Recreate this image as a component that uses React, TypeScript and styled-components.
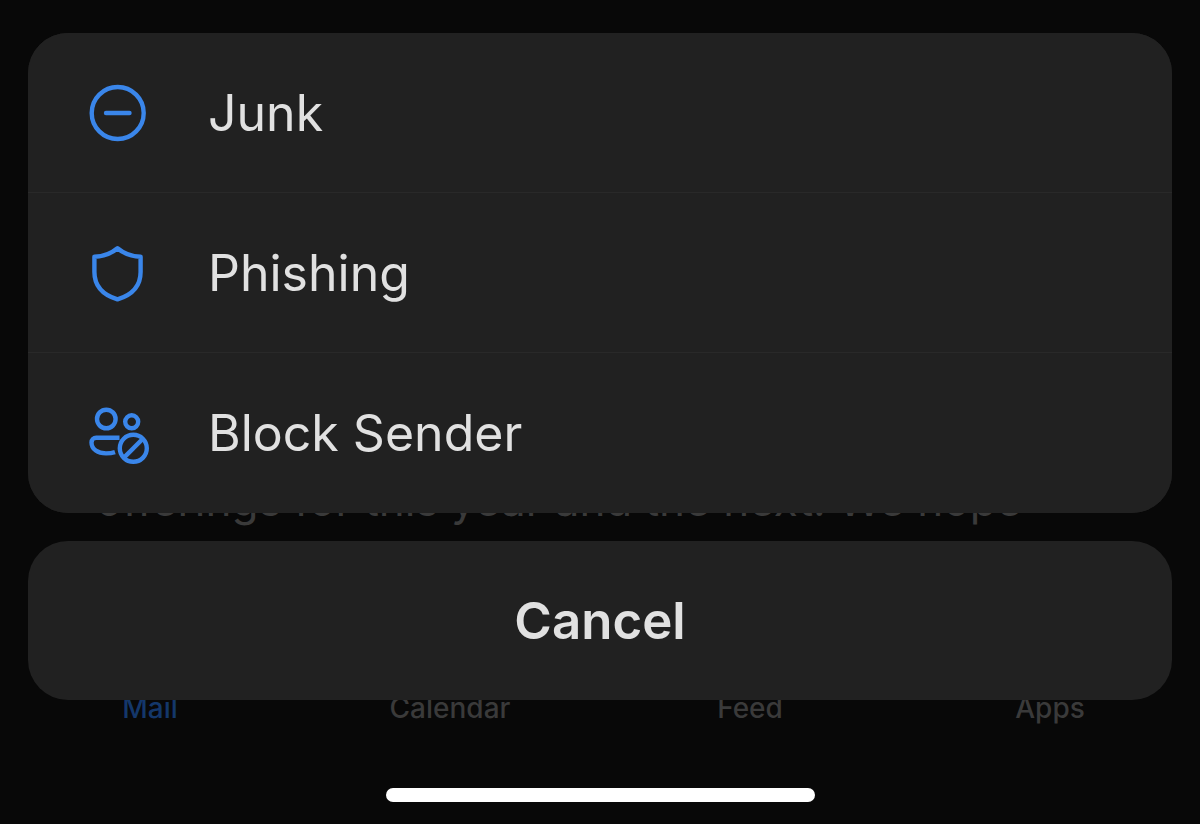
import React from "react";
import styled, { createGlobalStyle } from "styled-components";

const GlobalStyle = createGlobalStyle`
  *, *::before, *::after { box-sizing: border-box; }
  body {
    margin: 0;
    background: #080808;
    font-family: Inter, "Liberation Sans", sans-serif;
  }
`;

const Screen = styled.div`
  position: relative;
  min-height: 100vh;
  display: flex;
  flex-direction: column;
  justify-content: flex-end;
  overflow: hidden;
  background: #080808;
`;

const Message = styled.p`
  margin: 0 0 158px;
  padding: 0 96px;
  color: #3a3a3a;
  font-size: 44px;
  line-height: 64px;
  white-space: nowrap;
`;

const TabBar = styled.nav`
  display: grid;
  grid-template-columns: repeat(4, 1fr);
  margin-bottom: 62px;
`;

const Tab = styled.a<{ $active?: boolean }>`
  color: ${(p) => (p.$active ? "#14376a" : "#3a3a3a")};
  font-size: 28px;
  font-weight: 500;
  line-height: 36px;
  text-align: center;
  text-decoration: none;
`;

const HomeIndicator = styled.div`
  align-self: center;
  width: 429px;
  max-width: 60%;
  height: 14px;
  margin-bottom: 22px;
  border-radius: 7px;
  background: #ffffff;
`;

const Overlay = styled.div`
  position: absolute;
  inset: 0;
  display: flex;
  flex-direction: column;
  justify-content: flex-end;
  gap: 28px;
  padding: 0 28px 124px;
`;

const Card = styled.div`
  display: flex;
  flex-direction: column;
  border-radius: 40px;
  overflow: hidden;
  background: #212121;
`;

const SheetButton = styled.button`
  height: 159px;
  border: 0;
  padding: 0 58px;
  background: #212121;
  color: #e1e1e1;
  font-family: inherit;
  font-size: 50px;
  line-height: 64px;
  cursor: pointer;
`;

const ActionButton = styled(SheetButton)`
  display: flex;
  align-items: center;
  gap: 58px;
  height: 160px;
  text-align: left;

  &:not(:last-child) {
    border-bottom: 1px solid #292929;
  }
`;

const CancelButton = styled(SheetButton)`
  font-size: 51px;
  font-weight: 600;
`;

const Icon = styled.svg`
  flex: none;
  width: 64px;
  height: 64px;
  fill: none;
  stroke: #3a86ea;
  stroke-width: 4.4;
`;

const JunkIcon = () => (
  <Icon viewBox="0 0 64 64" aria-hidden="true">
    <circle cx="31.7" cy="32" r="26" />
    <path d="M20 32H43.5" strokeLinecap="round" />
  </Icon>
);

const ShieldIcon = () => (
  <Icon viewBox="0 0 64 64" aria-hidden="true">
    <path
      strokeLinejoin="round"
      d="M31.5 7.2C25.5 12.3 17.5 15.6 8.4 15.7V31C8.4 45 17 54 31.5 58.4C46 54 54.6 45 54.6 31V15.7C45.5 15.6 37.5 12.3 31.5 7.2Z"
    />
  </Icon>
);

const BlockIcon = () => (
  <Icon viewBox="0 0 64 64" aria-hidden="true">
    <circle cx="20.3" cy="18" r="9.3" />
    <circle cx="45.7" cy="20.8" r="6.5" />
    <path d="M33.5 36.8H10.2C7.6 36.8 5.5 38.8 5.5 41.4C5.5 48.4 12 52.4 20 52.4C23.3 52.4 26.3 52 29 51.1" />
    <circle cx="47.3" cy="47.3" r="13.5" />
    <path d="M38 56.6L56.6 38" />
  </Icon>
);

const actions = [
  { label: "Junk", Glyph: JunkIcon },
  { label: "Phishing", Glyph: ShieldIcon },
  { label: "Block Sender", Glyph: BlockIcon },
];

const tabs = ["Mail", "Calendar", "Feed", "Apps"];

export default function App() {
  return (
    <>
      <GlobalStyle />
      <Screen>
        <Message>offerings for this year and the next. We hope</Message>
        <TabBar>
          {tabs.map((tab, i) => (
            <Tab key={tab} href="#" $active={i === 0}>
              {tab}
            </Tab>
          ))}
        </TabBar>
        <HomeIndicator />
        <Overlay role="dialog" aria-label="Report message">
          <Card>
            {actions.map(({ label, Glyph }) => (
              <ActionButton key={label} type="button">
                <Glyph />
                {label}
              </ActionButton>
            ))}
          </Card>
          <Card>
            <CancelButton type="button">Cancel</CancelButton>
          </Card>
        </Overlay>
      </Screen>
    </>
  );
}
